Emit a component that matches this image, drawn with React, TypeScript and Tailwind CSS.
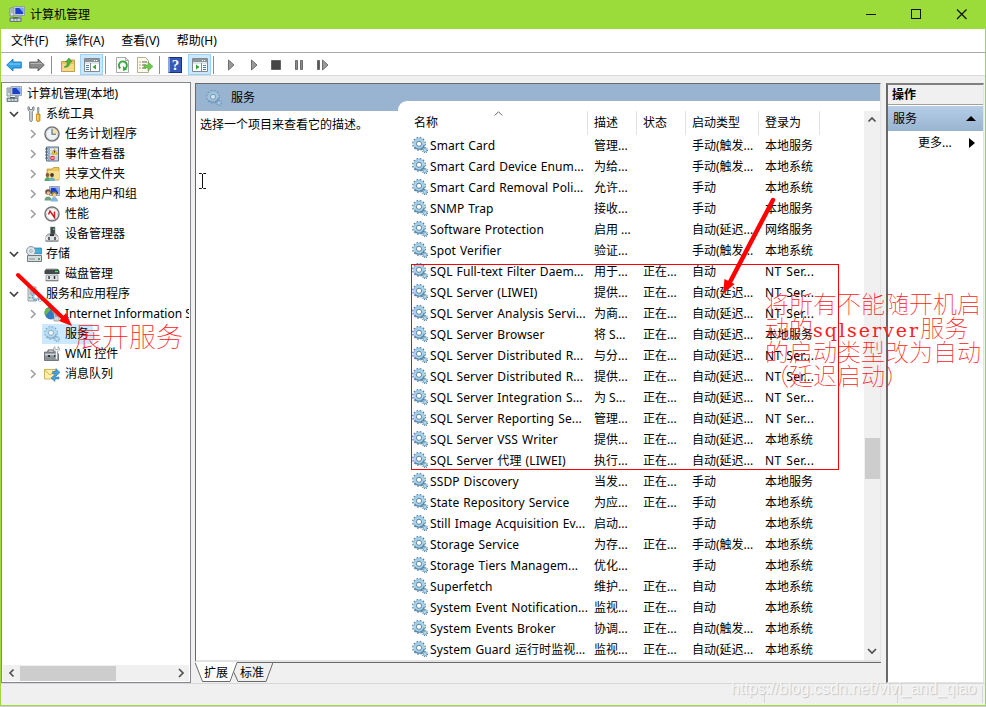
import React from 'react';

interface Service {
  name: string;
  desc: string;
  running: boolean;
  startup: string;
  account: string;
}

interface TreeNode {
  label: string;
  level: number;
  icon: React.ReactNode;
  arrow?: 'open' | 'closed';
  selected?: boolean;
}

const TRIGGER = '手动(触发...';
const DELAYED = '自动(延迟...';
const AUTO_TRIGGER = '自动(触发...';

const svc = (name: string, desc: string, running: boolean, startup: string, account: string): Service => ({
  name, desc, running, startup, account
});

const services: Service[] = [
  svc('Smart Card', '管理...', false, TRIGGER, '本地服务'),
  svc('Smart Card Device Enum...', '为给...', false, TRIGGER, '本地系统'),
  svc('Smart Card Removal Poli...', '允许...', false, '手动', '本地系统'),
  svc('SNMP Trap', '接收...', false, '手动', '本地服务'),
  svc('Software Protection', '启用 ...', false, DELAYED, '网络服务'),
  svc('Spot Verifier', '验证...', false, TRIGGER, '本地系统'),
  svc('SQL Full-text Filter Daem...', '用于...', true, '自动', 'NT Ser...'),
  svc('SQL Server (LIWEI)', '提供...', true, DELAYED, 'NT Ser...'),
  svc('SQL Server Analysis Servi...', '为商...', true, DELAYED, 'NT Ser...'),
  svc('SQL Server Browser', '将 S...', true, DELAYED, '本地服务'),
  svc('SQL Server Distributed R...', '与分...', true, DELAYED, 'NT Ser...'),
  svc('SQL Server Distributed R...', '提供...', true, DELAYED, 'NT Ser...'),
  svc('SQL Server Integration S...', '为 S...', true, DELAYED, 'NT Ser...'),
  svc('SQL Server Reporting Se...', '管理...', true, DELAYED, 'NT Ser...'),
  svc('SQL Server VSS Writer', '提供...', true, DELAYED, '本地系统'),
  svc('SQL Server 代理 (LIWEI)', '执行...', true, DELAYED, 'NT Ser...'),
  svc('SSDP Discovery', '当发...', true, '手动', '本地服务'),
  svc('State Repository Service', '为应...', true, '手动', '本地系统'),
  svc('Still Image Acquisition Ev...', '启动...', false, '手动', '本地系统'),
  svc('Storage Service', '为存...', true, TRIGGER, '本地系统'),
  svc('Storage Tiers Managem...', '优化...', false, '手动', '本地系统'),
  svc('Superfetch', '维护...', true, '自动', '本地系统'),
  svc('System Event Notification...', '监视...', true, '自动', '本地系统'),
  svc('System Events Broker', '协调...', true, AUTO_TRIGGER, '本地系统'),
  svc('System Guard 运行时监视...', '监视...', true, DELAYED, '本地系统')
];

const Icon = ({ children, className = '' }: { children: React.ReactNode; className?: string }) => (
  <svg width="16" height="16" viewBox="0 0 16 16" fill="none" className={`shrink-0 ${className}`}>{children}</svg>
);

const GearIcon = ({ className = '' }: { className?: string }) => (
  <Icon className={className}>
    <circle cx="7" cy="6.8" r="6.2" stroke="#4f7f9f" strokeWidth="1.400" strokeDasharray="1.600 1.646" />
    <circle cx="7" cy="6.800" r="4.200" fill="#fff" stroke="#a8d3ea" strokeWidth="3" />
    <path d="M2.600 9.800A5.400 5.400 0 0 0 12.300 8" stroke="#5c8bab" strokeWidth="1.300" />
    <path d="M1.700 6A5.400 5.400 0 0 1 12.200 5" stroke="#86b2cd" strokeWidth=".8" />
    <circle cx="7" cy="6.800" r="2.600" fill="#fff" stroke="#55809e" />
    <circle cx="13" cy="13" r="2.500" stroke="#4f7f9f" strokeWidth="1.200" strokeDasharray="1 .960" />
    <circle cx="13" cy="13" r="1.500" fill="#fff" stroke="#86b6d2" strokeWidth="1.400" />
  </Icon>
);

const ComputerIcon = () => (
  <Icon>
    <path d="M1 2h4v8H1z" fill="#d8dde2" stroke="#70808d" strokeWidth=".8" />
    <path d="M2 4h2M2 6h2" stroke="#60717e" strokeWidth=".8" />
    <path d="M5 .5h10.5v9H5z" fill="#e0e5ea" stroke="#8593a0" strokeWidth=".8" />
    <path d="M6.3 1.8h8v6.4h-8z" fill="#1b40cc" />
    <path d="M10 1.8h4.3v5z" fill="#7aa2f5" />
    <path d="M9 9.5h4v2H9z" fill="#98a5ae" />
    <path d="M1 12h11v3.5H1z" fill="#a4b2bb" stroke="#53646f" strokeWidth=".8" />
    <path d="M4 11h5v1.5H4z" fill="#52636e" />
    <path d="M2 14h2M6 14h1M9 14h2" stroke="#f4f7f8" />
  </Icon>
);

const ToolsIcon = () => (
  <Icon>
    <path d="M2 .8v3.4l1.7 1.3v9c0 1.3 2.6 1.3 2.6 0v-9L8 4.200V.8L6.500 1.300V3.500H3.500V1.300z" fill="#d5dadd" stroke="#6f787e" strokeWidth=".9" />
    <path d="M11.500 1.500h1.500l-.3 6h-1z" fill="#b7bec3" stroke="#7a8287" strokeWidth=".7" />
    <path d="M10.500 8h3.500v6.500c0 1.300-3.500 1.300-3.500 0z" fill="#f2b41c" stroke="#b27807" strokeWidth=".7" />
    <path d="M11.800 9v5" stroke="#ffe58b" />
  </Icon>
);

const ClockIcon = () => (
  <Icon>
    <circle cx="8" cy="8" r="7" fill="#eef3f7" stroke="#767676" strokeWidth="1.600" />
    <circle cx="8" cy="8" r="5.800" stroke="#c9d2d9" />
    <path d="M8 8V2.500A5.500 5.500 0 0 1 13.500 8z" fill="#f8dfa4" />
    <path d="M8 3v5.300h4" stroke="#4a6a8c" strokeWidth="1.100" />
  </Icon>
);

const EventIcon = () => (
  <Icon>
    <path d="M2.500 1h12v14h-12z" fill="#c3d1e2" stroke="#58708e" />
    <path d="M5 1v14" stroke="#7188a5" />
    <path d="M1 3h3M1 6h3M1 9h3M1 12h3" stroke="#495b70" />
    <path d="M6 3.500h7.500M6 6h7.500M6 9h7.500" stroke="#f2f6fa" />
    <path d="M10.500 3l3 5.200h-6z" fill="#ffd42a" stroke="#b88c00" strokeWidth=".6" />
    <path d="M10.500 4.800v2" stroke="#222" />
    <circle cx="8.500" cy="12" r="2.300" fill="#d93838" />
    <path d="M7.500 11l2 2m0-2l-2 2" stroke="#fff" strokeWidth=".7" />
  </Icon>
);

const SharedIcon = () => (
  <Icon>
    <path d="M3 3h5l1.500-1.500H15V14H3z" fill="#ecc65c" stroke="#b88b27" strokeWidth=".7" />
    <path d="M4 5h11v8.500H4z" fill="#f7df8c" />
    <circle cx="3.500" cy="9" r="1.900" fill="#8a5a30" />
    <circle cx="8" cy="9" r="1.900" fill="#49372a" />
    <path d="M.500 15c0-5 6-5 6 0z" fill="#57a96c" />
    <path d="M5 15c0-5 6-5 6 0z" fill="#6eb3c2" />
  </Icon>
);

const UsersIcon = () => (
  <Icon>
    <path d="M5.500 .500h10v9h-10z" fill="#dbe1e8" stroke="#8492a2" strokeWidth=".8" />
    <path d="M6.700 1.700h7.600v6.500H6.700z" fill="#1b40cc" />
    <path d="M11 1.700h3.300v5z" fill="#7aa2f5" />
    <circle cx="4" cy="6" r="2.800" fill="#6e5136" />
    <circle cx="4.300" cy="7" r="1.700" fill="#e9bd91" />
    <path d="M.500 14.500c0-5.500 7-5.500 7 0z" fill="#6ba078" />
    <circle cx="10.200" cy="8" r="2.600" fill="#a27a4a" />
    <circle cx="10.400" cy="8.900" r="1.700" fill="#f2cba3" />
    <path d="M6.500 15.500c0-6 7.500-6 7.500 0z" fill="#83b7dc" />
  </Icon>
);

const PerfIcon = () => (
  <Icon>
    <circle cx="8" cy="8" r="7" fill="#fff" stroke="#777" strokeWidth="1.500" />
    <circle cx="8" cy="8" r="5.600" stroke="#c9c9c9" strokeWidth=".8" />
    <path d="M4.500 8.500l1.500-3.500L10.500 11.500V5.500" stroke="#d71c1c" strokeWidth="1.500" />
  </Icon>
);

const DeviceIcon = () => (
  <Icon>
    <path d="M6.500 1H11v9H6.500z" fill="#3f4649" stroke="#777" strokeWidth=".5" />
    <path d="M9 2.500h1.500V4H9z" fill="#48e070" />
    <path d="M4 8h8l2 2v5H2v-5z" fill="#c4c8ca" stroke="#777d80" strokeWidth=".7" />
    <path d="M6 8h4v2H6z" fill="#33383b" />
    <path d="M2 10.500h12V15H2z" fill="#e2e4e5" />
    <path d="M5 11v3M11 11v3" stroke="#303437" strokeWidth="1.400" />
    <path d="M1.500 15h13" stroke="#686e72" />
  </Icon>
);

const StorageIcon = () => (
  <Icon>
    <path d="M8 2h7.500v6H8z" fill="#46afdd" stroke="#347a9e" strokeWidth=".7" />
    <circle cx="5" cy="5" r="4.500" fill="#dbe4e9" stroke="#7c8f9b" strokeWidth=".9" />
    <circle cx="5" cy="5" r="1.300" fill="#fff" stroke="#7c8f9b" strokeWidth=".7" />
    <path d="M2 10l2-2h10l1.500 2z" fill="#e2e6e9" />
    <path d="M1.500 9.500h14v6h-14z" fill="#d6dbde" stroke="#646d73" strokeWidth=".9" />
    <path d="M3 13h6" stroke="#858e94" />
    <path d="M12 12h2v2h-2z" fill="#34bb4d" />
  </Icon>
);

const DiskIcon = () => (
  <Icon>
    <path d="M2 3h12l1.500 2v3H.500V5z" fill="#44494c" />
    <path d="M2 3h11" stroke="#a2a7aa" />
    <path d="M11 5.500h3" stroke="#4ae873" strokeWidth="1.300" />
    <path d="M2 9h12v5.500H2z" fill="#dfe2e4" stroke="#8c9296" strokeWidth=".8" />
    <path d="M5 10v3M10.500 10v3" stroke="#303437" strokeWidth="1.400" />
    <path d="M1.500 14.800h13" stroke="#777" />
  </Icon>
);

const ServerAppsIcon = () => (
  <Icon>
    <path d="M2 1h8v14H2z" fill="#dae0e4" stroke="#8e99a1" strokeWidth=".9" />
    <path d="M3.500 4h5M3.500 6h5M3.500 8h3" stroke="#7c8a94" />
    <path d="M3 11h1.500v1.500H3z" fill="#40bb57" />
    <circle cx="10" cy="10.500" r="3.300" stroke="#5f8fb0" strokeWidth="2.400" strokeDasharray="1.300 .770" />
    <circle cx="10" cy="10.500" r="2.500" fill="#fff" stroke="#9cc5de" strokeWidth="1.500" />
    <circle cx="14" cy="14.200" r="1.500" stroke="#5f8fb0" strokeDasharray="1 .5" />
  </Icon>
);

const IisIcon = () => (
  <Icon>
    <circle cx="7" cy="7" r="6.500" fill="#3578c4" />
    <path d="M3 1.800c5-1 4 3 2 4S3 10 1.300 9.500C-.200 6 1 3 3 1.800z" fill="#62b74f" />
    <path d="M7 1c4-.5 5 2 5 4L9 7z" fill="#efc542" />
    <path d="M10 6h5v9h-5z" fill="#d6dade" stroke="#858d94" strokeWidth=".7" />
    <path d="M11 8h3M11 10h3" stroke="#6c7881" />
  </Icon>
);

const WmiIcon = () => (
  <Icon>
    <path d="M4 6V4h6v2" stroke="#50565b" />
    <path d="M.500 6h12l2 2v6.500H.500z" fill="#8a9299" stroke="#4d555b" strokeWidth=".7" />
    <path d="M1 8.500h13" stroke="#d2d7db" strokeWidth="1.500" />
    <path d="M4 10h2M10 10h2" stroke="#2e3337" strokeWidth="2" />
    <path d="M11 .5v3h3v-3c3 2 1 5-.5 5v8h-2v-8C9 4.500 8.500 2 11 .5z" fill="#eef0f2" stroke="#858d94" strokeWidth=".6" />
  </Icon>
);

const QueueIcon = () => (
  <Icon>
    <path d="M.500 3.500h11v9.500H.500z" fill="#fff0a9" stroke="#c8a23c" strokeWidth=".8" />
    <path d="M.500 4l5.500 5 5.500-5" stroke="#c8a23c" strokeWidth=".8" />
    <path d="M8.500 5.500h3.500V2.500l4 4-4 3.500V8H8.500z" fill="#43a3e5" stroke="#246a9e" strokeWidth=".5" />
    <path d="M15 11h-4V8.500L7 12l4 3.500V13h4z" fill="#43a3e5" stroke="#246a9e" strokeWidth=".5" />
  </Icon>
);

const nodes: TreeNode[] = [
  { label: '计算机管理(本地)', level: 0, icon: <ComputerIcon /> },
  { label: '系统工具', level: 1, icon: <ToolsIcon />, arrow: 'open' },
  { label: '任务计划程序', level: 2, icon: <ClockIcon />, arrow: 'closed' },
  { label: '事件查看器', level: 2, icon: <EventIcon />, arrow: 'closed' },
  { label: '共享文件夹', level: 2, icon: <SharedIcon />, arrow: 'closed' },
  { label: '本地用户和组', level: 2, icon: <UsersIcon />, arrow: 'closed' },
  { label: '性能', level: 2, icon: <PerfIcon />, arrow: 'closed' },
  { label: '设备管理器', level: 2, icon: <DeviceIcon /> },
  { label: '存储', level: 1, icon: <StorageIcon />, arrow: 'open' },
  { label: '磁盘管理', level: 2, icon: <DiskIcon /> },
  { label: '服务和应用程序', level: 1, icon: <ServerAppsIcon />, arrow: 'open' },
  { label: 'Internet Information S', level: 2, icon: <IisIcon />, arrow: 'closed' },
  { label: '服务', level: 2, icon: <GearIcon className="opacity-60" />, selected: true },
  { label: 'WMI 控件', level: 2, icon: <WmiIcon /> },
  { label: '消息队列', level: 2, icon: <QueueIcon />, arrow: 'closed' }
];

const Chevron = ({ dir, className = '' }: { dir: 'up' | 'down' | 'left' | 'right'; className?: string }) => {
  const d = {
    up: 'M1.500 6.500L5 3l3.500 3.500',
    down: 'M1 3l4 4 4-4',
    left: 'M6.500 1.500L3 5l3.500 3.500',
    right: 'M3 1l4 4-4 4'
  }[dir];
  return (
    <svg width="10" height="10" viewBox="0 0 10 10" fill="none" className={`shrink-0 ${className}`}>
      <path d={d} stroke="currentColor" strokeWidth="1.700" />
    </svg>
  );
};

const TreeRow = ({ node }: { node: TreeNode }) => (
  <div className="flex h-5 items-center whitespace-nowrap">
    {node.level > 0 && (
      <span className={node.level === 1 ? 'flex w-6 shrink-0 pl-[7px]' : 'flex w-[40px] shrink-0 pl-[26px]'}>
        {node.arrow === 'open' && <Chevron dir="down" className="text-[#404040]" />}
        {node.arrow === 'closed' && <Chevron dir="right" className="text-[#a3a3a3]" />}
      </span>
    )}
    <span className={`flex h-5 items-center ${node.level === 2 ? 'gap-[5px] pl-[2px] pr-1' : node.level === 1 ? 'gap-1' : 'gap-[5px] pl-[4px]'} ${node.selected ? 'bg-[#cce8ff]' : ''}`}>
      {node.icon}
      <span>{node.label}</span>
    </span>
  </div>
);

const ArrowIcon = ({ forward = false }: { forward?: boolean }) => (
  <Icon className={forward ? 'ml-[7px] rotate-180' : 'ml-[5px]'}>
    <path
      d="M.700 8L7 2v3h8.300v6H7V14z"
      fill={forward ? '#8b8b8b' : '#36a4e8'}
      stroke={forward ? '#606060' : '#1879b8'}
      strokeWidth=".9"
    />
    <path d={forward ? 'M3 9.500h11.500' : 'M3 7h11.500'} stroke={forward ? '#b4b4b4' : '#85cffa'} />
  </Icon>
);

const PaneIcon = ({ flip = false }: { flip?: boolean }) => (
  <Icon>
    <path d="M.500 1.500h15v13H.500z" fill="#fff" stroke="#818890" />
    <path d="M1 2h14v3H1z" fill="#8c949c" />
    <path d="M10 3.500h1M12 3.500h1" stroke="#fff" />
    <path d="M1 6h14" stroke="#c6ccd2" />
    <path d={flip ? 'M9.500 6v8.500' : 'M6.500 6v8.500'} stroke="#818890" />
    <path d={flip ? 'M11 8.500h3M11 10.500h3M11 12.500h3' : 'M2 8.500h3M2 10.500h3M2 12.500h3'} stroke="#4f7ba8" />
    <path d={flip ? 'M4 7.500v5L7.500 10z' : 'M12 7.500v5L8.500 10z'} fill="#30a52d" />
  </Icon>
);

const Sep = ({ className }: { className: string }) => <span className={`h-[18px] w-px shrink-0 bg-[#8f8f8f] ${className}`} />;

const Toolbar = () => (
  <div className="flex h-[23px] shrink-0 items-center border-b border-[#d9d9d9] bg-white pt-[2px]">
    <ArrowIcon />
    <ArrowIcon forward />
    <Sep className="ml-[6px]" />
    <Icon className="ml-[8px]">
      <path d="M1.500 4.500H7L8.500 3h6v11.500h-13z" fill="#eac467" stroke="#b68c36" strokeWidth=".8" />
      <path d="M2 7h12v7H2z" fill="#f7da89" />
      <path d="M4 10c2-1 3.500-2 3.500-5H5.500L9 1l3 4h-2c0 4-2.500 6-6 5z" fill="#4cb43b" stroke="#27871d" strokeWidth=".5" />
    </Icon>
    <span className="ml-1 flex h-[21px] w-[23px] items-center justify-center self-end border border-[#99d1ff] bg-[#cce8ff] pt-px"><PaneIcon /></span>
    <Sep className="ml-[2px]" />
    <Icon className="ml-[9px]">
      <path d="M1.500.5h9l3 3v12h-12z" fill="#fcfcfc" stroke="#939393" strokeWidth=".8" />
      <path d="M10.500.5v3h3" stroke="#939393" strokeWidth=".8" />
      <path d="M5.300 11.500A4 4 0 1 1 10 11.800" stroke="#35a83d" strokeWidth="1.900" />
      <path d="M8 9v5l4-1.500z" fill="#35a83d" />
    </Icon>
    <Icon className="ml-[6px]">
      <path d="M.500.5h8l3 3v12h-11z" fill="#fffbe9" stroke="#a69b80" strokeWidth=".8" />
      <path d="M2.500 5h1M5 5h5M2.500 8h1M5 8h4M2.500 11h1M5 11h4" stroke="#5a5a5a" />
      <path d="M7 8h4V5l5 4.500-5 4.500v-3H7z" fill="#6cc84d" stroke="#4c9d32" strokeWidth=".5" />
    </Icon>
    <Sep className="ml-[6px]" />
    <span className="ml-[8px] flex h-4 w-[14px] items-center justify-center border border-l-2 border-[#17327c] border-l-[#8fa5e0] bg-[#3659b5] font-['Liberation_Serif',serif] text-[15px] leading-none font-bold text-white">?</span>
    <span className="ml-[6px] flex h-[21px] w-[23px] items-center justify-center self-end border border-[#99d1ff] bg-[#cce8ff] pt-px"><PaneIcon flip /></span>
    <Sep className="ml-[2px]" />
    <Icon className="ml-[10px]"><path d="M4.500 3v10l5.500-5z" fill="#9a9a9a" stroke="#6d6d6d" /></Icon>
    <Icon className="ml-[7px]"><path d="M4.500 3v10l5.500-5z" fill="#9a9a9a" stroke="#6d6d6d" /></Icon>
    <Icon className="ml-[5px]"><path d="M3.500 3.500h9v9h-9z" fill="#454545" stroke="#626262" /></Icon>
    <Icon className="ml-[7px]"><path d="M4.500 3.500h2v9h-2zM9.500 3.500h2v9h-2z" fill="#8d8d8d" stroke="#616161" strokeWidth=".9" /></Icon>
    <Icon className="ml-[7px]">
      <path d="M3.500 3.500h2v9h-2z" fill="#555" stroke="#555" strokeWidth=".8" />
      <path d="M8.500 3v10l5.500-5z" fill="#9a9a9a" stroke="#6d6d6d" />
    </Icon>
  </div>
);

const TitleBar = () => (
  <div className="flex h-[29px] shrink-0 items-center bg-[#9bdb3a] pb-px pl-[8px]">
    <ComputerIcon />
    <span className="ml-[5px] pt-px">计算机管理</span>
    <svg width="106" height="12" viewBox="0 0 106 12" fill="none" stroke="#111" className="mr-[14px] mb-px ml-auto" shapeRendering="crispEdges">
      <path d="M1 6.500h10M46.500 1.500h9v9h-9z" />
      <path d="M92 1.500l9.500 9.500M101.500 1.500L92 11" shapeRendering="auto" strokeWidth="1.200" />
    </svg>
  </div>
);

const TreePane = () => (
  <div className="flex w-[190px] shrink-0 flex-col overflow-hidden border border-[#828790] bg-white">
    <div className="mr-px flex-1 overflow-hidden pt-px">
      {nodes.map((n, i) => <TreeRow key={i} node={n} />)}
    </div>
    <div className="mx-px mb-px flex h-4 shrink-0 items-center bg-[#f0f0f0] text-[#505050]">
      <span className="flex w-[17px] justify-center"><Chevron dir="left" /></span>
      <span className="h-[15px] w-24 bg-[#cdcdcd]" />
      <span className="ml-auto flex w-4 justify-center"><Chevron dir="right" /></span>
    </div>
  </div>
);

const GRID = 'grid grid-cols-[190px_49px_49px_73px_61px]';

const ServiceTable = () => (
  <div className="flex flex-1 rounded-tl-[9px] bg-white pt-[10px]">
    <div className="flex-1 overflow-hidden">
      <div className={`${GRID} h-6 items-stretch`}>
        <span className="relative border-r border-[#e2e2e2] pl-4 leading-[23px]">
          名称
          <svg width="9" height="5" viewBox="0 0 9 5" fill="none" className="absolute top-0 left-[96px]">
            <path d="M.700 4.500l3.800-3.800 3.800 3.800" stroke="#6b6b6b" />
          </svg>
        </span>
        {['描述', '状态', '启动类型', '登录为'].map(h => (
          <span key={h} className="border-r border-[#e2e2e2] pl-[6px] leading-[23px]">{h}</span>
        ))}
      </div>
      {services.map((s, i) => (
        <div key={i} className={`${GRID} h-[21px] items-center whitespace-nowrap`}>
          <span className="flex h-[21px] gap-[2px] pl-[14px] leading-[21px] tracking-[0.1px] [word-spacing:0.8px]">
            <GearIcon className="mt-[2px]" />
            <span>{s.name}</span>
          </span>
          <span className="pl-[6px]">{s.desc}</span>
          <span className="pl-[6px]">{s.running ? '正在...' : ''}</span>
          <span className="pl-[6px]">{s.startup}</span>
          <span className={s.account.startsWith('NT') ? 'pl-[6px] tracking-[0.3px] [word-spacing:1.500px]' : 'pl-[6px]'}>{s.account}</span>
        </div>
      ))}
    </div>
    <div className="flex w-4 shrink-0 flex-col items-center bg-[#f0f0f0] text-[#505050]">
      <Chevron dir="up" className="mt-1" />
      <span className="mt-[313px] h-[41px] w-[15px] bg-[#cdcdcd]" />
      <Chevron dir="down" className="mt-auto mb-1" />
    </div>
  </div>
);

const CenterPane = () => (
  <div className="mt-px ml-1 flex w-[686px] shrink-0 flex-col">
    <div className="flex h-[579px] shrink-0 border-t border-r border-b-2 border-l border-[#696969] border-r-[#e3e3e3] border-b-[#e3e3e3] bg-white">
      <div className="w-[202px] shrink-0">
        <div className="flex h-[27px] items-center bg-[#99b4d1] pl-[10px]">
          <GearIcon className="opacity-60" />
          <span className="ml-[9px]">服务</span>
        </div>
        <p className="mt-1 ml-[4px]">选择一个项目来查看它的描述。</p>
        <svg width="7" height="16" viewBox="0 0 7 16" fill="none" className="mt-[38px] ml-[3px]">
          <path d="M0 .5h2.500l1 1 1-1H7M0 15.500h2.500l1-1 1 1H7M3.500 1v14" stroke="#111" />
        </svg>
      </div>
      <div className="flex flex-1 flex-col bg-[linear-gradient(#99b4d1_27px,#fff_27px)] pt-[17px]">
        <ServiceTable />
      </div>
    </div>
    <div className="flex h-[21px]">
      <div className="relative w-[78px] shrink-0">
        <svg width="78" height="21" viewBox="0 0 78 21" fill="none" className="absolute inset-0">
          <path d="M0 0h42l-6 20H7z" fill="#fff" />
          <path d="M0 .5L7.500 19.500H35L42 .5h36l-7 19H43l-4-9" stroke="#696969" />
        </svg>
        <span className="absolute top-px left-[9px]">扩展</span>
        <span className="absolute top-px left-[45px]">标准</span>
      </div>
      <div className="flex-1 border-t border-[#696969]" />
    </div>
  </div>
);

const ActionsPane = () => (
  <div className="mt-px mr-px ml-[5px] flex-1 border-t-2 border-r border-b border-l-2 border-t-[#808080] border-r-[#e3e3e3] border-b-[#e3e3e3] border-l-[#696969] bg-white">
    <div className="h-5 border-b border-[#a0a0a0] bg-[#f0f0f0] pl-[4px] leading-[19px] font-bold">操作</div>
    <div className="mt-px flex h-[25px] items-center bg-linear-to-b from-[#b6cee6] to-[#99b4d1] pr-[7px] pl-[5px]">
      服务
      <svg width="10" height="5" viewBox="0 0 10 5" className="ml-auto"><path d="M5 0l5 5H0z" fill="#000" /></svg>
    </div>
    <div className="flex h-6 items-center pr-[8px] pl-[30px]">
      更多...
      <svg width="6" height="10" viewBox="0 0 6 10" className="ml-auto"><path d="M0 0l6 5-6 5z" fill="#000" /></svg>
    </div>
  </div>
);

// red marks drawn on top of the window
const Annotations = () => (
  <>
    <div className="absolute top-[264px] left-[411px] h-[206px] w-[428px] border border-[#f00]" />
    <svg width="986" height="707" viewBox="0 0 986 707" className="absolute inset-0">
      <path d="M18 275L63 318" stroke="#f00" strokeWidth="4" strokeLinecap="round" />
      <path d="M72 326l-13-5 7-8z" fill="#f00" />
      <path d="M773 200L730 282" stroke="#f00" strokeWidth="4.500" strokeLinecap="round" />
      <path d="M723 294l1.500-15 10 5z" fill="#f00" />
    </svg>
    <div className="absolute top-[320px] left-[75px] text-[27px] leading-[34px] font-thin whitespace-nowrap text-[#ff2020]">展开服务</div>
    <div className="absolute top-[292px] left-[765px] text-[24px] leading-6 font-thin whitespace-nowrap text-[#ff2020]">
      <div>将所有不能随开机启</div>
      <div className="h-6">动的<span className="font-['DejaVu_Serif',serif] text-[19px] leading-none tracking-[2px]">sqlserver</span>服务</div>
      <div>的启动类型改为自动</div>
      <div>（延迟启动）</div>
    </div>
    <div className="absolute top-[678px] left-[731px] font-['Liberation_Sans',sans-serif] text-[16px] leading-[22px] whitespace-nowrap text-[#f6f6f6] [text-shadow:1px_1px_1px_#c4c4c4]">https://blog.csdn.net/vivi_and_qiao</div>
  </>
);

const App: React.FC = () => {
  return (
    <div className="relative h-[707px] w-[986px] overflow-hidden bg-[#d0d0d0] font-['Noto_Sans','Noto_Sans_CJK_SC',sans-serif] text-[12px] leading-5 text-black">
      <div className="flex h-[706px] flex-col border-r border-b border-l border-[#9bdb3a] bg-[#f0f0f0]">
        <TitleBar />
        <div className="flex h-6 shrink-0 items-center gap-[17px] border-b border-[#a9a9a9] bg-white pl-[10px]">
          {['文件(F)', '操作(A)', '查看(V)', '帮助(H)'].map(m => <span key={m}>{m}</span>)}
        </div>
        <Toolbar />
        <main className="mt-[6px] flex h-[601px] shrink-0">
          <TreePane />
          <CenterPane />
          <ActionsPane />
        </main>
        <footer className="flex flex-1 border-t border-[#d7d7d7] pt-[2px] pb-[2px]">
          <span className="w-[764px] border-r border-[#d7d7d7]" />
          <span className="w-[133px] border-r border-[#d7d7d7]" />
          <span className="w-[85px] border-r border-[#d7d7d7]" />
        </footer>
      </div>
      <Annotations />
    </div>
  );
};

export default App;
